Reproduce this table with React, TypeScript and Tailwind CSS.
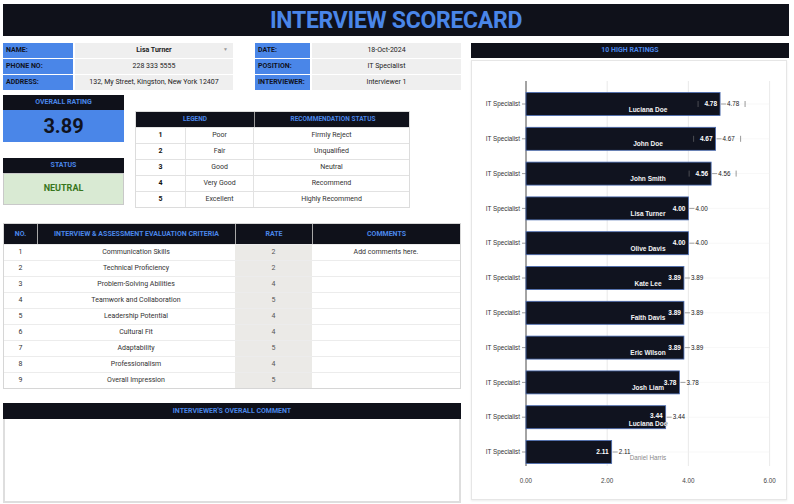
import React from 'react'

const info = [
  { label: 'NAME:', value: 'Lisa Turner', bold: true, caret: true },
  { label: 'PHONE NO:', value: '228 333 5555' },
  { label: 'ADDRESS:', value: '132, My Street, Kingston, New York 12407' },
]

const info2 = [
  { label: 'DATE:', value: '18-Oct-2024' },
  { label: 'POSITION:', value: 'IT Specialist' },
  { label: 'INTERVIEWER:', value: 'Interviewer 1' },
]

const legend = [
  ['1', 'Poor', 'Firmly Reject'],
  ['2', 'Fair', 'Unqualified'],
  ['3', 'Good', 'Neutral'],
  ['4', 'Very Good', 'Recommend'],
  ['5', 'Excellent', 'Highly Recommend'],
]

const criteria: [string, number][] = [
  ['Communication Skills', 2],
  ['Technical Proficiency', 2],
  ['Problem-Solving Abilities', 4],
  ['Teamwork and Collaboration', 5],
  ['Leadership Potential', 4],
  ['Cultural Fit', 4],
  ['Adaptability', 5],
  ['Professionalism', 4],
  ['Overall Impression', 5],
]

const ratings: [string, number][] = [
  ['Luciana Doe', 4.78],
  ['John Doe', 4.67],
  ['John Smith', 4.56],
  ['Lisa Turner', 4.0],
  ['Olive Davis', 4.0],
  ['Kate Lee', 3.89],
  ['Faith Davis', 3.89],
  ['Eric Wilson', 3.89],
  ['Josh Liam', 3.78],
  ['Luciana Doe', 3.44],
  ['Daniel Harris', 2.11],
]

const RatingsChart = () => {
  const x0 = 54
  const unit = 40.6
  const cy = (i: number) => 43 + i * 34.8
  return (
    <svg width="316" height="440" className="block" style={{ fontFamily: '"Liberation Sans", Arial, sans-serif' }}>
      {[2, 4, 6].map((v) => (
        <line key={v} x1={x0 + v * unit} x2={x0 + v * unit} y1={20} y2={405} stroke="#e4e4e4" strokeWidth={0.8} />
      ))}
      {ratings.map((_, i) => (
        <line key={i} x1={x0} x2={x0 + 6 * unit} y1={cy(i)} y2={cy(i)} stroke="#f2f2f2" strokeWidth={0.6} />
      ))}
      <line x1={x0} x2={x0} y1={20} y2={405} stroke="#333" strokeWidth={0.9} />
      {ratings.map(([name, v], i) => {
        const w = v * unit
        const y = cy(i)
        // the 3.44 bar is short, so its value sits a little higher above the name
        const valueY = i === 9 ? y + 0.5 : y + 2.2
        return (
          <g key={i}>
            <line x1={x0 - 4} x2={x0} y1={y} y2={y} stroke="#555" strokeWidth={0.6} />
            <text x={x0 - 6} y={y + 2.2} textAnchor="end" fontSize="6.3" fill="#333">
              IT Specialist
            </text>
            <rect x={x0} y={y - 11.5} width={w} height={23} fill="#10131f" stroke="#4a6cb3" strokeWidth={0.8} />
            <text x={x0 + w - 3} y={valueY} textAnchor="end" fontSize="6.5" fontWeight="bold" fill="#fff">
              {v.toFixed(2)}
            </text>
            <line x1={x0 + w + 1} x2={x0 + w + 6} y1={y} y2={y} stroke="#666" strokeWidth={0.6} />
            <text x={x0 + w + 7} y={y + 2.2} fontSize="6.3" fill="#222">
              {v.toFixed(2)}
            </text>
            {i < 3 ? (
              <>
                <line x1={x0 + w - 22} x2={x0 + w - 22} y1={y - 3} y2={y + 3} stroke="#888" strokeWidth={0.5} />
                <line x1={x0 + w + 25} x2={x0 + w + 25} y1={y - 3} y2={y + 3} stroke="#555" strokeWidth={0.6} />
              </>
            ) : null}
            {i === ratings.length - 1 ? (
              <text x={176} y={y + 8} textAnchor="middle" fontSize="6.3" fill="#8a8a8a">
                {name}
              </text>
            ) : (
              <text
                x={176}
                y={i === 9 ? y + 8.5 : y + 7.5}
                textAnchor="middle"
                fontSize="6.5"
                fontWeight="bold"
                fill="#f2f2f2"
                stroke="#1a1d2b"
                strokeWidth={0.4}
                paintOrder="stroke"
              >
                {name}
              </text>
            )}
          </g>
        )
      })}
      {[0, 2, 4, 6].map((v) => (
        <text key={v} x={x0 + v * unit} y={422} textAnchor="middle" fontSize="6.3" fill="#444">
          {v.toFixed(2)}
        </text>
      ))}
    </svg>
  )
}

const InfoBlock = ({
  rows,
  labelW,
  valueW,
}: {
  rows: { label: string; value: string; bold?: boolean; caret?: boolean }[]
  labelW: string
  valueW: string
}) => (
  <div className="flex flex-col gap-px">
    {rows.map((row) => (
      <div key={row.label} className="flex h-[15px] gap-[2px]">
        <div className={`${labelW} flex items-center bg-[#4a86e8] pl-[3px] text-[7px] font-bold text-[#10131f]`}>
          {row.label}
        </div>
        <div
          className={`${valueW} relative flex items-center justify-center bg-[#efefef] text-[7px] text-[#222] ${
            row.bold ? 'font-bold' : ''
          }`}
        >
          {row.value}
          {row.caret ? <span className="absolute right-[5px] top-[3px] text-[5px] text-[#999]">▼</span> : null}
        </div>
      </div>
    ))}
  </div>
)

export default function App() {
  return (
    <div
      className="h-[504px] w-[794px] overflow-hidden bg-white pl-[3px] pr-[5px] pt-[4px]"
      style={{ fontFamily: 'Roboto, "Liberation Sans", sans-serif' }}
    >
      <div className="flex h-[32px] items-center justify-center bg-[#0f111a]">
        <h1 className="text-[23px] font-bold leading-none tracking-[-0.3px] text-[#4a86e8]">INTERVIEW SCORECARD</h1>
      </div>

      <div className="mt-[7px] flex gap-[10px]">
        {/* left side */}
        <div className="flex w-[458px] flex-col">
          <div className="flex gap-[22px]">
            <InfoBlock rows={info} labelW="w-[70px]" valueW="w-[158px]" />
            <InfoBlock rows={info2} labelW="w-[55px]" valueW="w-[149px]" />
          </div>

          <div className="mt-[5px] flex gap-[11px]">
            <div className="flex w-[121px] flex-col">
              <div className="flex h-[15px] items-center justify-center bg-[#0f111a] text-[7px] font-bold text-[#4a86e8]">
                OVERALL RATING
              </div>
              <div className="flex h-[32px] items-center justify-center bg-[#4a86e8] text-[20px] font-bold text-[#10131f]">
                3.89
              </div>
              <div className="mt-[16px] flex h-[15px] items-center justify-center bg-[#0f111a] text-[7px] font-bold text-[#4a86e8]">
                STATUS
              </div>
              <div className="flex h-[32px] items-center justify-center border border-[#c9c9c9] bg-[#d9ead3] text-[9px] font-bold text-[#38761d]">
                NEUTRAL
              </div>
            </div>

            <div className="mt-[16px] w-[275px] border border-[#dcdcdc]">
              <div className="grid h-[15px] grid-cols-[118px_157px] bg-[#0f111a] text-[6.5px] font-bold text-[#4a86e8]">
                <div className="flex items-center justify-center">LEGEND</div>
                <div className="flex items-center justify-center border-l border-[#9a9a9a]">RECOMMENDATION STATUS</div>
              </div>
              {legend.map(([n, label, status]) => (
                <div
                  key={n}
                  className="grid h-[16px] grid-cols-[49px_68px_156px] border-t border-[#e2e2e2] text-[7px] text-[#333]"
                >
                  <div className="flex items-center justify-center font-bold text-[#111]">{n}</div>
                  <div className="flex items-center justify-center border-l border-[#e2e2e2]">{label}</div>
                  <div className="flex items-center justify-center border-l border-[#e2e2e2]">{status}</div>
                </div>
              ))}
            </div>
          </div>

          <div className="mt-[15px] border border-[#d6d6d6]">
            <div className="grid h-[20px] grid-cols-[33px_198px_77px_148px] bg-[#0f111a] text-[7px] font-bold text-[#4a86e8]">
              <div className="flex items-center justify-center">NO.</div>
              <div className="flex items-center justify-center border-l border-[#a8a8a8]">
                INTERVIEW &amp; ASSESSMENT EVALUATION CRITERIA
              </div>
              <div className="flex items-center justify-center border-l border-[#a8a8a8]">RATE</div>
              <div className="flex items-center justify-center border-l border-[#a8a8a8]">COMMENTS</div>
            </div>
            {criteria.map(([name, rate], i) => (
              <div
                key={name}
                className="grid h-[16px] grid-cols-[33px_198px_77px_148px] border-t border-[#ececec] text-[7px] text-[#333]"
              >
                <div className="flex items-center justify-center">{i + 1}</div>
                <div className="flex items-center justify-center">{name}</div>
                <div className="flex items-center justify-center bg-[#ebeae7] text-[#555]">{rate}</div>
                <div className="flex items-center justify-center">{i === 0 ? 'Add comments here.' : ''}</div>
              </div>
            ))}
          </div>

          <div className="mt-[14px] flex flex-col">
            <div className="flex h-[16px] items-center justify-center bg-[#0f111a] text-[7px] font-bold text-[#4a86e8]">
              INTERVIEWER&apos;S OVERALL COMMENT
            </div>
            <div className="h-[84px] border-x-2 border-b-2 border-[#dedede] bg-white" />
          </div>
        </div>

        {/* right side */}
        <div className="flex w-[318px] flex-col gap-[2px]">
          <div className="flex h-[15px] items-center justify-center bg-[#0f111a] text-[7px] font-bold text-[#4a86e8]">
            10 HIGH RATINGS
          </div>
          <div className="h-[440px] w-[316px] border border-[#e6e6e6] bg-white shadow-[0_1px_2px_rgba(0,0,0,0.08)]">
            <RatingsChart />
          </div>
        </div>
      </div>
    </div>
  )
}
